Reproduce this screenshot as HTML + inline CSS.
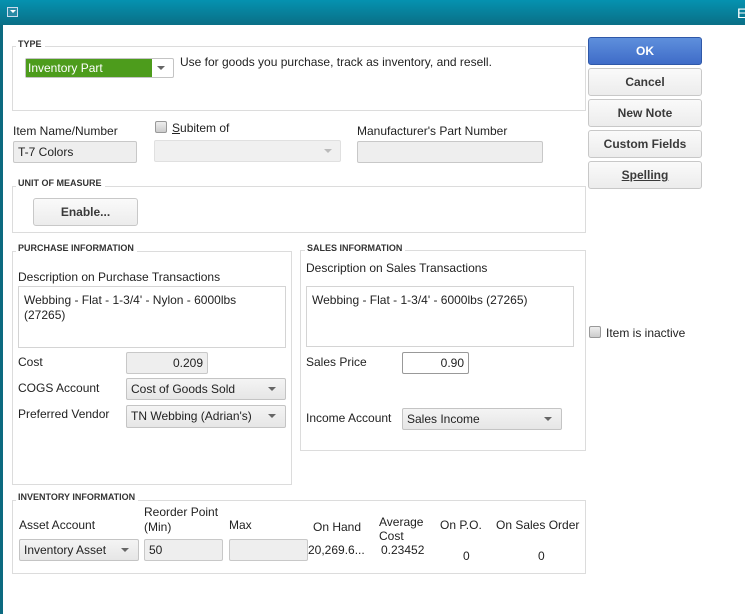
<!DOCTYPE html>
<html><head><style>
*{box-sizing:border-box;margin:0;padding:0}
body{width:745px;height:614px;position:relative;overflow:hidden;background:#fff;font-family:"Liberation Sans",Arial,sans-serif;font-size:12px;color:#222}
.a{position:absolute;white-space:nowrap}
.grp{position:absolute;border:1px solid #dcdcdc}
.gl{position:absolute;font-size:9px;font-weight:bold;background:#fff;padding:0 3px 0 2px;color:#333}
.inp{position:absolute;background:#eee;border:1px solid #c8c8c8;border-radius:2px;padding:3px 4px;font-size:12px}
.dd{position:absolute;background:linear-gradient(#f4f4f4,#e6e6e6);border:1px solid #c4c4c4;border-radius:2px;padding:3px 4px;font-size:12px}
.dd::after{content:"";position:absolute;right:9px;top:8px;border-left:4px solid transparent;border-right:4px solid transparent;border-top:4px solid #666}
.btn{position:absolute;left:588px;width:114px;height:28px;border:1px solid #c8c8c8;border-radius:3px;background:linear-gradient(#fafafa,#ececec);font-weight:bold;color:#3a3a3a;text-align:center;line-height:26px;font-size:12px}
.ta{position:absolute;border:1px solid #d4d4d4;padding:6px 5px;font-size:12px;line-height:15px;white-space:normal}
.cb{position:absolute;width:12px;height:12px;border:1px solid #999;border-radius:2px;background:linear-gradient(#eee,#ccc)}
</style></head><body>
<div class="a" style="left:0;top:0;width:745px;height:25px;background:linear-gradient(#0592b0,#0a6f86)"></div>
<div class="a" style="left:0;top:25px;width:3px;height:589px;background:#0c6a80"></div>
<div class="a" style="left:7px;top:7px;width:11px;height:10px;border:1px solid #cde;background:#2a8aa5"><div style="position:absolute;left:2px;top:2px;border-left:3px solid transparent;border-right:3px solid transparent;border-top:3px solid #fff"></div></div>
<div class="a" style="left:737px;top:5px;color:#fff;font-size:14px">E</div>

<div class="grp" style="left:12px;top:46px;width:574px;height:65px"></div>
<div class="gl" style="left:16px;top:39px">TYPE</div>
<div class="a" style="left:25px;top:58px;width:149px;height:20px;background:#fff;border:1px solid #c4c4c4;border-radius:2px"></div>
<div class="a" style="left:26px;top:59px;width:126px;height:18px;background:#4d9c1c;color:#fff;padding:2px 2px">Inventory Part</div>
<div class="a" style="left:157px;top:66px;border-left:4px solid transparent;border-right:4px solid transparent;border-top:4px solid #666"></div>
<div class="a" style="left:180px;top:55px">Use for goods you purchase, track as inventory, and resell.</div>

<div class="btn" style="top:37px;background:linear-gradient(#5e8fdc,#3f6cc8);border-color:#2f58a8;color:#fff">OK</div>
<div class="btn" style="top:68px">Cancel</div>
<div class="btn" style="top:99px">New Note</div>
<div class="btn" style="top:130px">Custom Fields</div>
<div class="btn" style="top:161px"><u>Spelling</u></div>

<div class="a" style="left:13px;top:124px">Item Name/Number</div>
<div class="inp" style="left:13px;top:141px;width:124px;height:22px">T-7 Colors</div>
<div class="cb" style="left:155px;top:121px"></div>
<div class="a" style="left:172px;top:121px"><u>S</u>ubitem of</div>
<div class="inp" style="left:154px;top:140px;width:187px;height:22px;background:#f0f0f0;border-color:#e0e0e0"></div>
<div class="a" style="left:324px;top:149px;border-left:4px solid transparent;border-right:4px solid transparent;border-top:4px solid #bbb"></div>
<div class="a" style="left:357px;top:124px">Manufacturer's Part Number</div>
<div class="inp" style="left:357px;top:141px;width:186px;height:22px"></div>

<div class="grp" style="left:12px;top:186px;width:574px;height:47px"></div>
<div class="gl" style="left:16px;top:178px">UNIT OF MEASURE</div>
<div class="btn" style="left:33px;top:198px;width:105px;height:28px">Enable...</div>

<div class="grp" style="left:12px;top:251px;width:280px;height:234px"></div>
<div class="gl" style="left:16px;top:243px">PURCHASE INFORMATION</div>
<div class="a" style="left:18px;top:270px">Description on Purchase Transactions</div>
<div class="ta" style="left:18px;top:286px;width:268px;height:62px">Webbing - Flat - 1-3/4' - Nylon - 6000lbs (27265)</div>
<div class="a" style="left:18px;top:355px">Cost</div>
<div class="inp" style="left:126px;top:352px;width:82px;height:22px;text-align:right">0.209</div>
<div class="a" style="left:18px;top:381px">COGS Account</div>
<div class="dd" style="left:126px;top:378px;width:160px;height:22px">Cost of Goods Sold</div>
<div class="a" style="left:18px;top:407px">Preferred Vendor</div>
<div class="dd" style="left:126px;top:405px;width:160px;height:23px">TN Webbing (Adrian's)</div>

<div class="grp" style="left:300px;top:250px;width:286px;height:201px"></div>
<div class="gl" style="left:305px;top:243px">SALES INFORMATION</div>
<div class="a" style="left:306px;top:261px">Description on Sales Transactions</div>
<div class="ta" style="left:306px;top:286px;width:268px;height:61px">Webbing - Flat - 1-3/4' - 6000lbs (27265)</div>
<div class="a" style="left:306px;top:355px">Sales Price</div>
<div class="inp" style="left:402px;top:352px;width:67px;height:22px;background:#fff;border-color:#999;text-align:right">0.90</div>
<div class="a" style="left:306px;top:411px">Income Account</div>
<div class="dd" style="left:402px;top:408px;width:160px;height:22px">Sales Income</div>

<div class="cb" style="left:589px;top:326px"></div>
<div class="a" style="left:606px;top:326px">Item is inactive</div>

<div class="grp" style="left:12px;top:500px;width:574px;height:74px"></div>
<div class="gl" style="left:16px;top:492px">INVENTORY INFORMATION</div>
<div class="a" style="left:19px;top:518px">Asset Account</div>
<div class="a" style="left:144px;top:505px;line-height:15px">Reorder Point<br>(Min)</div>
<div class="a" style="left:229px;top:518px">Max</div>
<div class="a" style="left:313px;top:520px">On Hand</div>
<div class="a" style="left:379px;top:515px;line-height:14px">Average<br>Cost</div>
<div class="a" style="left:440px;top:518px">On P.O.</div>
<div class="a" style="left:496px;top:518px">On Sales Order</div>
<div class="dd" style="left:19px;top:539px;width:120px;height:22px">Inventory Asset</div>
<div class="inp" style="left:144px;top:539px;width:79px;height:22px">50</div>
<div class="inp" style="left:229px;top:539px;width:79px;height:22px"></div>
<div class="a" style="left:308px;top:543px">20,269.6...</div>
<div class="a" style="left:381px;top:543px">0.23452</div>
<div class="a" style="left:463px;top:549px">0</div>
<div class="a" style="left:538px;top:549px">0</div>
</body></html>
